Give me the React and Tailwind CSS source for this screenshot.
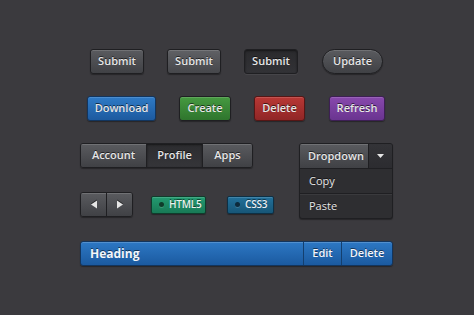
const btn =
  "flex items-center justify-center h-[25px] rounded-[3px] border border-[#1f1f22] text-[11px] font-semibold text-[#e6e6e6] [text-shadow:0_-1px_0_rgba(0,0,0,0.6)] shadow-[inset_0_1px_0_rgba(255,255,255,0.14),0_1px_1px_rgba(0,0,0,0.35)]";

const gray = "bg-linear-to-b from-[#5a5b5f] to-[#404145]";

function Arrow({ dir }) {
  return (
    <svg width="8" height="9" viewBox="0 0 8 9" className="drop-shadow-[0_-1px_0_rgba(0,0,0,0.6)]">
      {dir === "left" ? <path d="M7 0.5 L7 8.5 L1 4.5 Z" fill="#e6e6e6" /> : <path d="M1 0.5 L1 8.5 L7 4.5 Z" fill="#e6e6e6" />}
    </svg>
  );
}

export default function App() {
  return (
    <div className="w-[474px] h-[315px] bg-[#3b3a3e] font-['Open_Sans','Noto_Sans',sans-serif] overflow-hidden">
      <div className="flex flex-col pt-[49px] pl-[80px]">
        {/* row 1 */}
        <div className="flex pl-[10px] gap-[23px]">
          <div className={`${btn} ${gray} w-[54px]`}>Submit</div>
          <div className={`${btn} bg-linear-to-b from-[#606165] to-[#46474b] w-[54px]`}>Submit</div>
          <div className={`${btn} bg-linear-to-b from-[#2a2a2d] to-[#323236] shadow-[inset_0_1px_2px_rgba(0,0,0,0.5),0_1px_0_rgba(255,255,255,0.06)] w-[54px]`}>Submit</div>
          <div className={`${btn} ${gray} !rounded-full w-[61px] ml-[1px]`}>Update</div>
        </div>

        {/* row 2 */}
        <div className="flex pl-[7px] gap-[23px] mt-[22px]">
          <div className={`${btn} bg-linear-to-b from-[#2f7bc6] to-[#1d5a9f] border-[#12355e] w-[69px]`}>Download</div>
          <div className={`${btn} bg-linear-to-b from-[#469a41] to-[#2f752d] border-[#1b441a] w-[52px]`}>Create</div>
          <div className={`${btn} bg-linear-to-b from-[#b93835] to-[#902626] border-[#561615] w-[51px]`}>Delete</div>
          <div className={`${btn} bg-linear-to-b from-[#8849ad] to-[#6a3490] border-[#3d1f54] w-[56px] ml-[1px]`}>Refresh</div>
        </div>

        {/* rows 3-4 with dropdown */}
        <div className="flex mt-[22px]">
          <div className="flex flex-col w-[219px]">
            <div className="flex h-[25px] w-[173px] rounded-[3px] border border-[#1f1f22] overflow-hidden shadow-[0_1px_1px_rgba(0,0,0,0.35)] text-[11px] font-semibold text-[#e6e6e6] [text-shadow:0_-1px_0_rgba(0,0,0,0.6)]">
              <div className={`flex items-center justify-center w-[65px] ${gray} shadow-[inset_0_1px_0_rgba(255,255,255,0.14)]`}>Account</div>
              <div className="flex items-center justify-center w-[57px] bg-linear-to-b from-[#2c2c2f] to-[#353539] border-x border-[#1f1f22] shadow-[inset_0_1px_2px_rgba(0,0,0,0.5)]">Profile</div>
              <div className={`flex items-center justify-center flex-1 ${gray} shadow-[inset_0_1px_0_rgba(255,255,255,0.14)]`}>Apps</div>
            </div>
            <div className="flex items-center h-[25px] mt-[24px]">
              <div className="flex h-[25px] w-[53px] rounded-[3px] border border-[#1f1f22] overflow-hidden shadow-[0_1px_1px_rgba(0,0,0,0.35)]">
                <div className={`flex items-center justify-center flex-1 ${gray} border-r border-[#1f1f22] shadow-[inset_0_1px_0_rgba(255,255,255,0.14)]`}><Arrow dir="left" /></div>
                <div className={`flex items-center justify-center flex-1 ${gray} shadow-[inset_0_1px_0_rgba(255,255,255,0.14)]`}><Arrow dir="right" /></div>
              </div>
              <div className="flex items-center gap-[5px] pl-[7px] ml-[18px] h-[18px] w-[55px] rounded-[2px] border border-[#0f3d2c] bg-linear-to-b from-[#239a70] to-[#187a56] text-[10px] font-semibold tracking-[-0.2px] text-[#e8f4ee] [text-shadow:0_-1px_0_rgba(0,0,0,0.5)] shadow-[inset_0_1px_0_rgba(255,255,255,0.15),0_1px_1px_rgba(0,0,0,0.35)]">
                <span className="shrink-0 w-[5px] h-[5px] rounded-full bg-[#0f3b2a] shadow-[0_1px_0_rgba(255,255,255,0.15)]" />
                HTML5
              </div>
              <div className="flex items-center gap-[5px] pl-[7px] ml-[21px] h-[18px] w-[47px] rounded-[2px] border border-[#0d3045] bg-linear-to-b from-[#22709a] to-[#175677] text-[10px] font-semibold tracking-[-0.2px] text-[#e8f0f6] [text-shadow:0_-1px_0_rgba(0,0,0,0.5)] shadow-[inset_0_1px_0_rgba(255,255,255,0.15),0_1px_1px_rgba(0,0,0,0.35)]">
                <span className="shrink-0 w-[5px] h-[5px] rounded-full bg-[#0c2a3c] shadow-[0_1px_0_rgba(255,255,255,0.15)]" />
                CSS3
              </div>
            </div>
          </div>

          <div className="flex flex-col w-[94px] rounded-[3px] border border-[#1f1f22] overflow-hidden bg-[#2e2e31] shadow-[0_1px_1px_rgba(0,0,0,0.35)] text-[11px] font-semibold text-[#e6e6e6] [text-shadow:0_-1px_0_rgba(0,0,0,0.6)]">
            <div className="flex h-[24px]">
              <div className={`flex items-center pl-[8px] w-[69px] ${gray} border-r border-[#1f1f22] shadow-[inset_0_1px_0_rgba(255,255,255,0.14)]`}>Dropdown</div>
              <div className="flex items-center justify-center flex-1 bg-linear-to-b from-[#333337] to-[#2c2c30]">
                <svg width="7" height="4" viewBox="0 0 7 4"><path d="M0 0 L7 0 L3.5 4 Z" fill="#e6e6e6" /></svg>
              </div>
            </div>
            <div className="flex items-center h-[25px] pl-[9px] border-t border-[#1f1f22] font-normal">Copy</div>
            <div className="flex items-center h-[25px] pl-[9px] border-t border-[#1f1f22] shadow-[inset_0_1px_0_rgba(255,255,255,0.06)] font-normal">Paste</div>
          </div>
        </div>

        {/* heading bar */}
        <div className="flex w-[313px] h-[25px] mt-[22px] rounded-[3px] border border-[#12355e] overflow-hidden bg-linear-to-b from-[#2d78c4] to-[#1b5aa0] shadow-[inset_0_1px_0_rgba(255,255,255,0.18),0_1px_1px_rgba(0,0,0,0.35)] text-[#f2f6fb] [text-shadow:0_-1px_0_rgba(0,0,0,0.5)]">
          <div className="flex items-center flex-1 pl-[9px] text-[12px] font-bold">Heading</div>
          <div className="flex items-center justify-center w-[38px] border-l border-[#143f6e] text-[11px] font-semibold">Edit</div>
          <div className="flex items-center justify-center w-[51px] border-l border-[#143f6e] text-[11px] font-semibold">Delete</div>
        </div>
      </div>
    </div>
  );
}
